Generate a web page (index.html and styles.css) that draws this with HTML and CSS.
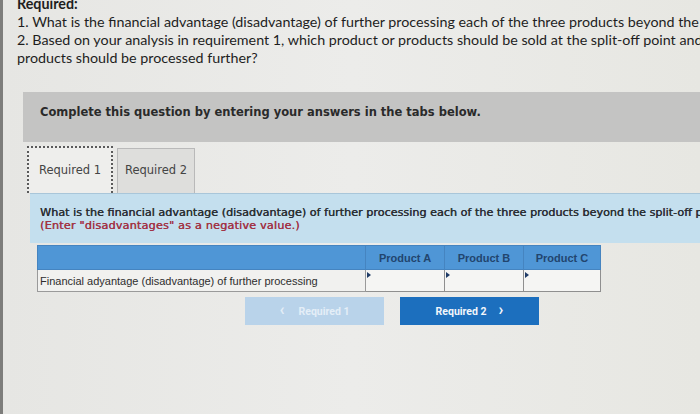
FILE: index.html
```html
<!DOCTYPE html>
<html>
<head>
<meta charset="utf-8">
<link rel="stylesheet" href="styles.css">
</head>
<body>
<div class="page">
  <div class="req">
    <div class="req-title">Required:</div>
    <div class="req-line">1. What is the financial advantage (disadvantage) of further processing each of the three products beyond the split-off point?</div>
    <div class="req-line">2. Based on your analysis in requirement 1, which product or products should be sold at the split-off point and which</div>
    <div class="req-line">products should be processed further?</div>
  </div>
  <div class="content">
    <div class="banner">Complete this question by entering your answers in the tabs below.</div>
    <div class="tabs">
      <div class="tab tab-active">Required 1</div>
      <div class="tab tab-inactive">Required 2</div>
    </div>
    <div class="panel">
      <div class="q">What is the financial advantage (disadvantage) of further processing each of the three products beyond the split-off point?</div>
      <div class="note">(Enter "disadvantages" as a negative value.)</div>
    </div>
    <table class="grid">
      <tr class="head">
        <th class="label-col"></th>
        <th class="pcol">Product A</th>
        <th class="pcol">Product B</th>
        <th class="pcol pc">Product C</th>
      </tr>
      <tr class="row">
        <td class="label">Financial adyantage (disadvantage) of further processing</td>
        <td class="inp"><span class="mark"></span></td>
        <td class="inp"><span class="mark"></span></td>
        <td class="inp"><span class="mark"></span></td>
      </tr>
    </table>
    <div class="nav">
      <div class="btn btn-prev"><span class="chev">&lsaquo;</span>Required 1</div>
      <div class="btn btn-next">Required 2<span class="chev chev-r">&rsaquo;</span></div>
    </div>
  </div>
</div>
</body>
</html>
```

FILE: styles.css
```css
html, body {
  margin: 0;
  padding: 0;
  width: 700px;
  height: 414px;
  overflow: hidden;
  background: #e9e9e6;
}
.page {
  height: 414px;
  border-left: 3px solid #7d7d7b;
  background: linear-gradient(90deg, #e6e6e3 0%, #ececea 50%, #e7e7e2 100%);
  overflow: hidden;
}
.req {
  margin-top: -5px;
  padding-left: 14px;
  font-family: Lato, "Liberation Sans", sans-serif;
  font-size: 14.3px;
  line-height: 18px;
  color: #1e1e1e;
  white-space: nowrap;
}
.req-title {
  font-weight: bold;
}
.req-line {
  line-height: 18px;
}
.content {
  margin-left: 20px;
  margin-top: 25px;
  width: 760px;
}
.banner {
  height: 50px;
  box-sizing: border-box;
  padding: 13px 0 0 17px;
  background: #c4c4c3;
  font-family: "DejaVu Sans", Verdana, sans-serif;
  font-weight: bold;
  font-size: 11.5px;
  color: #2a2a2a;
  white-space: nowrap;
}
.tabs {
  display: flex;
  align-items: flex-end;
  gap: 4px;
  margin-top: 4px;
  margin-left: 4px;
  height: 47px;
}
.tab {
  box-sizing: border-box;
  display: flex;
  align-items: center;
  justify-content: center;
  font-family: "DejaVu Sans", Verdana, sans-serif;
  font-size: 11.5px;
  color: #444;
  padding-bottom: 2px;
}
.tab-active {
  width: 86px;
  height: 47px;
  border: 2px dotted #5a5a5a;
  border-bottom: none;
  background: #eeeeec;
}
.tab-inactive {
  width: 78px;
  height: 45px;
  border: 1px solid #b9b9b9;
  border-bottom: none;
  background: #dededc;
}
.panel {
  margin-left: 7px;
  height: 50px;
  box-sizing: border-box;
  padding: 12px 0 0 10px;
  background: #c4dfee;
  font-family: "DejaVu Sans", Verdana, sans-serif;
  font-size: 11.2px;
  line-height: 13px;
  white-space: nowrap;
  border-top: 1px solid #a9c6d9;
}
.q {
  color: #2a2e33;
  text-shadow: 0.35px 0 0 #2a2e33;
}
.note {
  color: #a23244;
  text-shadow: 0.35px 0 0 #a23244;
  letter-spacing: 0.2px;
}
.grid {
  margin-left: 14px;
  margin-top: 2px;
  border-collapse: collapse;
  font-family: "Liberation Sans", Arial, sans-serif;
}
.head th {
  height: 23px;
  padding: 0;
  background: #4f96d6;
  border: 1px solid #4584c0;
  color: #22456e;
  font-size: 11px;
  font-weight: bold;
  vertical-align: middle;
}
.label-col {
  width: 327px;
}
.pcol {
  width: 78px;
}
.head th.pc {
  width: 76px;
}
.row td {
  height: 21px;
  padding: 0;
  background: #f5f5f3;
  border: 1px solid #8f8f8f;
}
.row td.label {
  padding-left: 2px;
  font-size: 11px;
  color: #2e2e2e;
  background: #f1f1ef;
  border-color: #9a9a9a;
}
.inp {
  position: relative;
}
.mark {
  position: absolute;
  left: 1px;
  top: 2px;
  width: 0;
  height: 0;
  border-left: 4px solid #1f3b66;
  border-top: 3px solid transparent;
  border-bottom: 3px solid transparent;
}
.nav {
  display: flex;
  gap: 16px;
  margin-left: 222px;
  margin-top: 5px;
}
.btn {
  box-sizing: border-box;
  width: 139px;
  height: 28px;
  display: flex;
  align-items: center;
  justify-content: center;
  font-family: Roboto, "Liberation Sans", sans-serif;
  font-weight: bold;
  font-size: 10.5px;
}
.btn-prev {
  background: #b9d3ea;
  color: #e4eef7;
}
.btn-next {
  background: #1c6fbe;
  color: #f2f6fb;
}
.chev {
  font-size: 16px;
  margin-right: 14px;
  line-height: 1;
  margin-top: -2px;
}
.chev-r {
  margin-right: 0;
  margin-left: 12px;
}
```
